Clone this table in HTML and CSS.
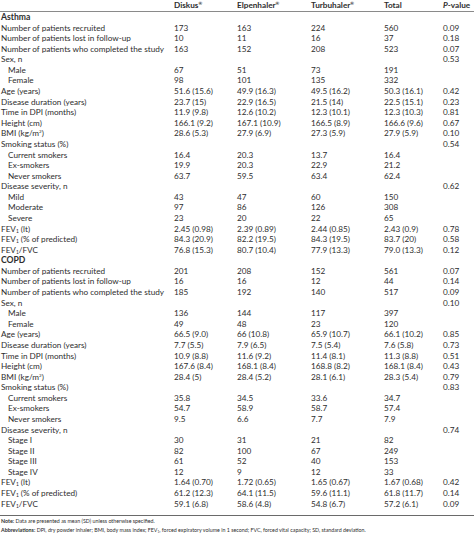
FILE: index.html
```html
<!DOCTYPE html>
<html>
<head>
<meta charset="utf-8">
<link rel="stylesheet" href="styles.css">
</head>
<body>
<div class="wrap">
<table class="tbl">
<colgroup>
<col class="c-label"><col class="c-d"><col class="c-e"><col class="c-t"><col class="c-tot"><col class="c-p">
</colgroup>
<thead>
<tr><th></th><th>Diskus<sup>®</sup></th><th>Elpenhaler<sup>®</sup></th><th>Turbuhaler<sup>®</sup></th><th>Total</th><th><i>P</i>-value</th></tr>
</thead>
<tbody>
<tr class="sec"><td>Asthma</td><td></td><td></td><td></td><td></td><td></td></tr>
<tr><td>Number of patients recruited</td><td>173</td><td>163</td><td>224</td><td>560</td><td>0.09</td></tr>
<tr><td>Number of patients lost in follow-up</td><td>10</td><td>11</td><td>16</td><td>37</td><td>0.18</td></tr>
<tr><td>Number of patients who completed the study</td><td>163</td><td>152</td><td>208</td><td>523</td><td>0.07</td></tr>
<tr><td>Sex, n</td><td></td><td></td><td></td><td></td><td>0.53</td></tr>
<tr><td class="ind">Male</td><td>67</td><td>51</td><td>73</td><td>191</td><td></td></tr>
<tr><td class="ind">Female</td><td>98</td><td>101</td><td>135</td><td>332</td><td></td></tr>
<tr><td>Age (years)</td><td>51.6 (15.6)</td><td>49.9 (16.3)</td><td>49.5 (16.2)</td><td>50.3 (16.1)</td><td>0.42</td></tr>
<tr><td>Disease duration (years)</td><td>23.7 (15)</td><td>22.9 (16.5)</td><td>21.5 (14)</td><td>22.5 (15.1)</td><td>0.23</td></tr>
<tr><td>Time in DPI (months)</td><td>11.9 (9.8)</td><td>12.6 (10.2)</td><td>12.3 (10.1)</td><td>12.3 (10.3)</td><td>0.81</td></tr>
<tr><td>Height (cm)</td><td>166.1 (9.2)</td><td>167.1 (10.9)</td><td>166.5 (8.9)</td><td>166.6 (9.6)</td><td>0.67</td></tr>
<tr><td>BMI (kg/m<sup>2</sup>)</td><td>28.6 (5.3)</td><td>27.9 (6.9)</td><td>27.3 (5.9)</td><td>27.9 (5.9)</td><td>0.10</td></tr>
<tr><td>Smoking status (%)</td><td></td><td></td><td></td><td></td><td>0.54</td></tr>
<tr><td class="ind">Current smokers</td><td>16.4</td><td>20.3</td><td>13.7</td><td>16.4</td><td></td></tr>
<tr><td class="ind">Ex-smokers</td><td>19.9</td><td>20.3</td><td>22.9</td><td>21.2</td><td></td></tr>
<tr><td class="ind">Never smokers</td><td>63.7</td><td>59.5</td><td>63.4</td><td>62.4</td><td></td></tr>
<tr><td>Disease severity, n</td><td></td><td></td><td></td><td></td><td>0.62</td></tr>
<tr><td class="ind">Mild</td><td>43</td><td>47</td><td>60</td><td>150</td><td></td></tr>
<tr><td class="ind">Moderate</td><td>97</td><td>86</td><td>126</td><td>308</td><td></td></tr>
<tr><td class="ind">Severe</td><td>23</td><td>20</td><td>22</td><td>65</td><td></td></tr>
<tr><td>FEV<sub>1</sub> (lt)</td><td>2.45 (0.98)</td><td>2.39 (0.89)</td><td>2.44 (0.85)</td><td>2.43 (0.9)</td><td>0.78</td></tr>
<tr><td>FEV<sub>1</sub> (% of predicted)</td><td>84.3 (20.9)</td><td>82.2 (19.5)</td><td>84.3 (19.5)</td><td>83.7 (20)</td><td>0.58</td></tr>
<tr><td>FEV<sub>1</sub>/FVC</td><td>76.8 (15.3)</td><td>80.7 (10.4)</td><td>77.9 (13.3)</td><td>79.0 (13.3)</td><td>0.12</td></tr>
<tr class="sec"><td>COPD</td><td></td><td></td><td></td><td></td><td></td></tr>
<tr><td>Number of patients recruited</td><td>201</td><td>208</td><td>152</td><td>561</td><td>0.07</td></tr>
<tr><td>Number of patients lost in follow-up</td><td>16</td><td>16</td><td>12</td><td>44</td><td>0.14</td></tr>
<tr><td>Number of patients who completed the study</td><td>185</td><td>192</td><td>140</td><td>517</td><td>0.09</td></tr>
<tr><td>Sex, n</td><td></td><td></td><td></td><td></td><td>0.10</td></tr>
<tr><td class="ind">Male</td><td>136</td><td>144</td><td>117</td><td>397</td><td></td></tr>
<tr><td class="ind">Female</td><td>49</td><td>48</td><td>23</td><td>120</td><td></td></tr>
<tr><td>Age (years)</td><td>66.5 (9.0)</td><td>66 (10.8)</td><td>65.9 (10.7)</td><td>66.1 (10.2)</td><td>0.85</td></tr>
<tr><td>Disease duration (years)</td><td>7.7 (5.5)</td><td>7.9 (6.5)</td><td>7.5 (5.4)</td><td>7.6 (5.8)</td><td>0.73</td></tr>
<tr><td>Time in DPI (months)</td><td>10.9 (8.8)</td><td>11.6 (9.2)</td><td>11.4 (8.1)</td><td>11.3 (8.8)</td><td>0.51</td></tr>
<tr><td>Height (cm)</td><td>167.6 (8.4)</td><td>168.1 (8.4)</td><td>168.8 (8.2)</td><td>168.1 (8.4)</td><td>0.43</td></tr>
<tr><td>BMI (kg/m<sup>2</sup>)</td><td>28.4 (5)</td><td>28.4 (5.2)</td><td>28.1 (6.1)</td><td>28.3 (5.4)</td><td>0.79</td></tr>
<tr><td>Smoking status (%)</td><td></td><td></td><td></td><td></td><td>0.83</td></tr>
<tr><td class="ind">Current smokers</td><td>35.8</td><td>34.5</td><td>33.6</td><td>34.7</td><td></td></tr>
<tr><td class="ind">Ex-smokers</td><td>54.7</td><td>58.9</td><td>58.7</td><td>57.4</td><td></td></tr>
<tr><td class="ind">Never smokers</td><td>9.5</td><td>6.6</td><td>7.7</td><td>7.9</td><td></td></tr>
<tr><td>Disease severity, n</td><td></td><td></td><td></td><td></td><td>0.74</td></tr>
<tr><td class="ind">Stage I</td><td>30</td><td>31</td><td>21</td><td>82</td><td></td></tr>
<tr><td class="ind">Stage II</td><td>82</td><td>100</td><td>67</td><td>249</td><td></td></tr>
<tr><td class="ind">Stage III</td><td>61</td><td>52</td><td>40</td><td>153</td><td></td></tr>
<tr><td class="ind">Stage IV</td><td>12</td><td>9</td><td>12</td><td>33</td><td></td></tr>
<tr><td>FEV<sub>1</sub> (lt)</td><td>1.64 (0.70)</td><td>1.72 (0.65)</td><td>1.65 (0.67)</td><td>1.67 (0.68)</td><td>0.42</td></tr>
<tr><td>FEV<sub>1</sub> (% of predicted)</td><td>61.2 (12.3)</td><td>64.1 (11.5)</td><td>59.6 (11.1)</td><td>61.8 (11.7)</td><td>0.14</td></tr>
<tr class="last"><td>FEV<sub>1</sub>/FVC</td><td>59.1 (6.8)</td><td>58.6 (4.8)</td><td>54.8 (6.7)</td><td>57.2 (6.1)</td><td>0.09</td></tr>
</tbody>
</table>
<p class="note"><b>Note:</b> Data are presented as mean (SD) unless otherwise specified.</p>
<p class="note"><b>Abbreviations:</b> DPI, dry powder inhaler; BMI, body mass index; FEV<sub>1</sub>, forced expiratory volume in 1 second; FVC, forced vital capacity; SD, standard deviation.</p>
</div>
</body>
</html>
```

FILE: styles.css
```css
html, body {
  margin: 0;
  padding: 0;
  background: #ffffff;
}
body {
  font-family: Lato, "Open Sans", "DejaVu Sans", sans-serif;
  color: #2e2e2e;
}
.wrap {
  width: 474px;
}
.tbl {
  width: 474px;
  border-collapse: collapse;
  table-layout: fixed;
  font-size: 8.2px;
}
.c-label { width: 173px; }
.c-d { width: 63px; }
.c-e { width: 74px; }
.c-t { width: 73px; }
.c-tot { width: 59px; }
.c-p { width: 32px; }
.tbl th {
  text-align: left;
  font-weight: 700;
  height: 11px;
  line-height: 11px;
  padding: 0 0 0 1px;
  border-bottom: 1px solid #8a8a8a;
  white-space: nowrap;
}
.tbl td {
  height: 10.58px;
  line-height: 10.58px;
  padding: 0 0 0 1px;
  white-space: nowrap;
  vertical-align: middle;
}
.tbl tr.sec td:first-child {
  font-weight: 700;
  font-size: 8.6px;
}
.tbl td.ind {
  padding-left: 8px;
}
.tbl tr.last td {
  height: 16px;
  vertical-align: top;
  line-height: 10.58px;
  border-bottom: 1.5px solid #6a6a6a;
}
sup {
  font-size: 55%;
  line-height: 0;
  vertical-align: 0.6em;
}
sub {
  font-size: 60%;
  line-height: 0;
  vertical-align: -0.25em;
}
.note {
  margin: 0;
  font-size: 5.3px;
  line-height: 9px;
  padding-left: 1px;
  white-space: nowrap;
}
.note:first-of-type {
  margin-top: 1px;
}
.note b {
  font-weight: 700;
}
```
